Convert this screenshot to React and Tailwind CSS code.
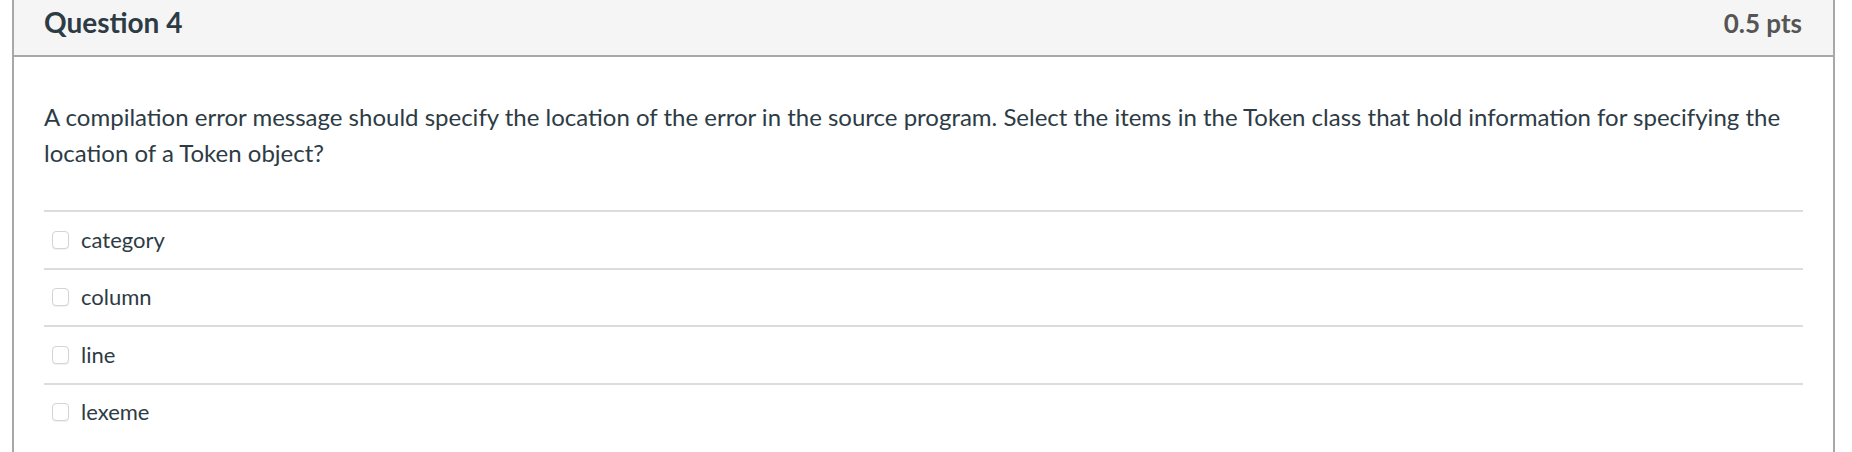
const answers = ['category', 'column', 'line', 'lexeme'];

function Checkbox() {
  return (
    <span className="block h-[18px] w-[17px] shrink-0 rounded-[4px] border border-[#d4d4d4] bg-white shadow-[0_1px_1px_rgba(0,0,0,0.06)]" />
  );
}

export default function App() {
  return (
    <div className="h-[452px] w-[1852px] overflow-hidden bg-white font-['Lato','Liberation_Sans',sans-serif] text-[#2d3b45]">
      <div className="ml-[12px] w-[1823px] border-x-2 border-[#a8a8a8]">
        <div className="flex h-[57px] items-start justify-between border-b-2 border-[#a8a8a8] bg-[#f5f5f5] pl-[30px] pr-[31px] pt-[4px]">
          <h2 className="text-[28px] font-bold leading-[36px]">Question 4</h2>
          <div className="pt-[1px] text-[26px] font-bold leading-[36px] text-[#555555]">0.5 pts</div>
        </div>
        <div className="px-[30px] pt-[42px] pb-[20px]">
          <p className="text-[24px] leading-[36px]">
            A compilation error message should specify the location of the error in the source program. Select the items in the Token class that hold information for specifying the location of a Token object?
          </p>
          <div className="mt-[39px]">
            {answers.map((a) => (
              <div key={a} className="flex h-[57.5px] items-center border-t-2 border-[#dcdcdc] pl-[8px]">
                <Checkbox />
                <span className="ml-[12px] text-[22px] leading-[30px]">{a}</span>
              </div>
            ))}
          </div>
        </div>
      </div>
    </div>
  );
}
